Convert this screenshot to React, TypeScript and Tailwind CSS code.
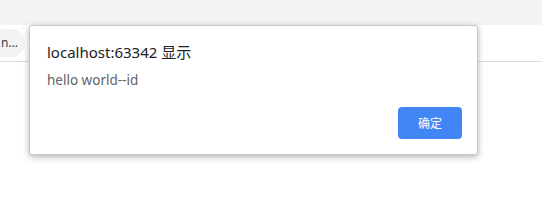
export default function App() {
  return (
    <div className="relative w-[542px] h-[217px] bg-white overflow-hidden" style={{ fontFamily: '"Noto Sans", "Noto Sans CJK SC", sans-serif' }}>
      <div className="h-[25px] bg-[#f1f3f4]" />
      <div className="h-[37px] border-b border-[#dadce0] flex items-center">
        <div className="ml-[-20px] h-[28px] w-[45px] rounded-full bg-[#f1f3f4] flex items-center justify-end pr-[7px] text-[12px] text-[#3c4043]">n...</div>
      </div>
      <div className="absolute left-[29px] top-[25px] w-[449px] h-[130px] bg-white rounded-[3px] border border-[#c8c8c8] shadow-[0_2px_6px_rgba(0,0,0,0.3)] pl-[17px] pr-[15px] pt-[14px]">
        <div className="text-[15px] leading-[24px] text-[#202124]">localhost:63342 显示</div>
        <div className="mt-[7px] text-[13.5px] leading-[18px] text-[#5f6368]">hello world--id</div>
        <div className="flex justify-end mt-[18px]">
          <button className="w-[64px] h-[32px] rounded-[4px] bg-[#4285f4] text-white text-[12px]" style={{ fontFamily: '"Noto Sans CJK SC", sans-serif' }}>确定</button>
        </div>
      </div>
    </div>
  );
}
